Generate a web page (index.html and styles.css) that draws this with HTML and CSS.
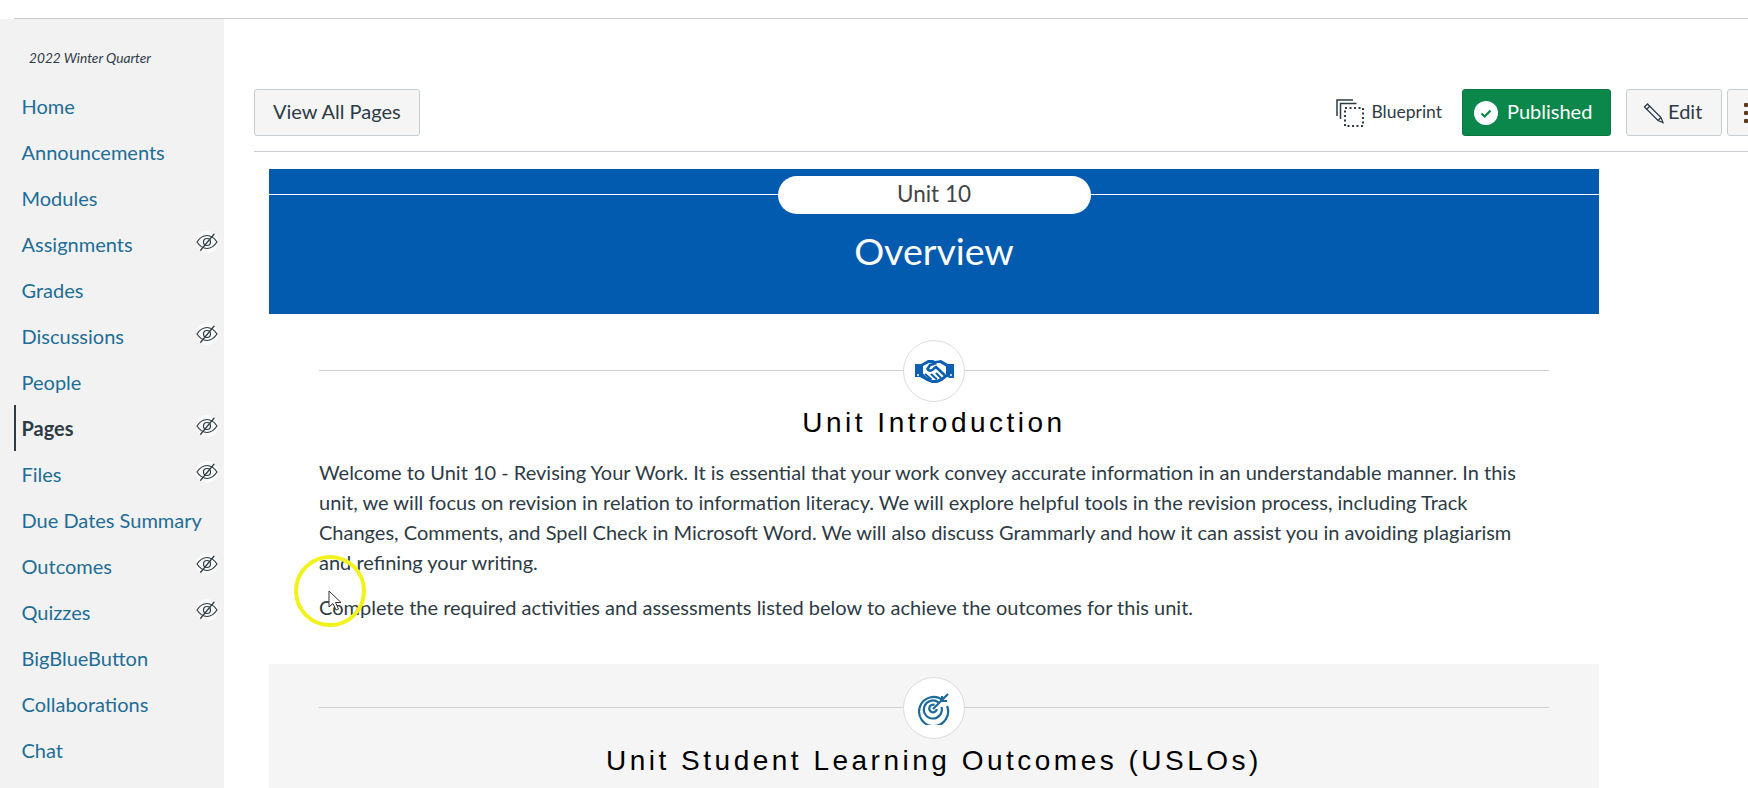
FILE: index.html
```html
<!DOCTYPE html>
<html lang="en">
<head>
  <meta charset="UTF-8">
  <meta name="viewport" content="width=device-width, initial-scale=1.0">
  <title>Overview</title>
  <link rel="stylesheet" href="styles.css">
</head>
<body>
<div class="top-line"></div>
<div class="layout">
  <nav class="sidebar">
    <div class="term">2022 Winter Quarter</div>
    <ul class="nav">
      <li><a href="#">Home</a></li>
      <li><a href="#">Announcements</a></li>
      <li><a href="#">Modules</a></li>
      <li><a href="#">Assignments</a><svg class="eye"><use href="#eye-off"/></svg></li>
      <li><a href="#">Grades</a></li>
      <li><a href="#">Discussions</a><svg class="eye"><use href="#eye-off"/></svg></li>
      <li><a href="#">People</a></li>
      <li class="active"><a href="#">Pages</a><svg class="eye"><use href="#eye-off"/></svg></li>
      <li><a href="#">Files</a><svg class="eye"><use href="#eye-off"/></svg></li>
      <li><a href="#">Due Dates Summary</a></li>
      <li><a href="#">Outcomes</a><svg class="eye"><use href="#eye-off"/></svg></li>
      <li><a href="#">Quizzes</a><svg class="eye"><use href="#eye-off"/></svg></li>
      <li><a href="#">BigBlueButton</a></li>
      <li><a href="#">Collaborations</a></li>
      <li><a href="#">Chat</a></li>
    </ul>
  </nav>

  <main class="main">
    <div class="toolbar">
      <a class="btn" href="#">View All Pages</a>
      <div class="toolbar-right">
        <span class="blueprint">
          <svg width="28" height="28" viewBox="0 0 28 28" fill="none" stroke="#2d3b45" stroke-width="1.5">
            <path d="M1 17V1h16"/>
            <path d="M4.5 20V4.500h16"/>
            <path d="M9 9h18v18H9z" stroke-width="2" stroke-dasharray="2 2.500"/>
          </svg>
          Blueprint
        </span>
        <a class="btn btn-published" href="#">
          <svg width="24" height="24" viewBox="0 0 24 24">
            <circle cx="12" cy="12" r="12" fill="#fff"/>
            <path d="M7.500 12.500l3.200 3 5.800-6" fill="none" stroke="#0b874b" stroke-width="2.200"/>
          </svg>
          Published
        </a>
        <a class="btn btn-edit" href="#">
          <svg width="22" height="22" viewBox="0 0 22 22" fill="none" stroke="#2d3b45" stroke-width="1.300">
            <path d="M1.500 5L4.500 2 18 15.500 20 20.500 15 18.500z"/>
            <path d="M3.500 7.500l3.500-3.500M15 18.500l3-3"/>
          </svg>
          Edit
        </a>
        <a class="btn btn-more" href="#"><span class="kebab"></span></a>
      </div>
    </div>

    <div class="page">
      <div class="banner">
        <div class="pill-row"><span class="pill">Unit 10</span></div>
        <h1>Overview</h1>
      </div>

      <section class="block">
        <div class="divider">
          <span class="icon-circle">
            <svg width="39" height="24" viewBox="0 0 39 24">
              <path fill="#0d5fb3" d="M0 5h6l7-4h5l2 1 6-1 7 4h6v14h-4l-3-1-5 4-5 2h-5l-5-2-7-4H0z"/>
              <path fill="#fff" d="M8 7L14 4h11l6 3.500v8l-3 2-6 3.500h-5l-6-3.500-3-3z"/>
              <path fill="none" stroke="#0d5fb3" stroke-width="2.600" d="M21.500 4L15 6l-2.500 4c1 2.500 4.500 2 6.500-.5L21 8l9 8.500"/>
              <path fill="none" stroke="#0d5fb3" stroke-width="2" d="M10 15l6.500 5.500M16 15l6 5.500M21 14l5 5"/>
              <circle cx="3" cy="16" r="1" fill="#fff"/>
              <circle cx="36" cy="16" r="1" fill="#fff"/>
            </svg>
          </span>
        </div>
        <h2>Unit Introduction</h2>
        <p>Welcome to Unit 10 - Revising Your Work. It is essential that your work convey accurate information in an understandable manner. In this unit, we will focus on revision in relation to information literacy. We will explore helpful tools in the revision process, including Track Changes, Comments, and Spell Check in Microsoft Word. We will also discuss Grammarly and how it can assist you in avoiding plagiarism and refining your writing.</p>
        <p>Complete the required activities and assessments listed below to achieve the outcomes for this unit.</p>
      </section>

      <section class="block block-gray">
        <div class="divider">
          <span class="icon-circle">
            <svg width="34" height="34" viewBox="0 0 34 34" fill="none" stroke="#1d6a9e" stroke-width="2.200">
              <path d="M26 9.500A14.500 14.500 0 1 0 30 15"/>
              <path d="M21.500 11.500A9 9 0 1 0 24.500 16"/>
              <path d="M17.500 14A3.800 3.800 0 1 0 19.800 18"/>
              <path d="M16 18L31 3M25 5v5h5"/>
            </svg>
          </span>
        </div>
        <h2>Unit Student Learning Outcomes (USLOs)</h2>
      </section>
    </div>
  </main>
</div>

<!-- cursor highlight from the screen recording -->
<div class="cursor-ring"></div>
<svg class="cursor" width="14" height="22" viewBox="0 0 14 22">
  <path d="M1 1v16l4-3.500 3 6.500 2.500-1-3-6.500H13z" fill="#fff" stroke="#333" stroke-width="1"/>
</svg>

<svg class="defs" width="0" height="0">
  <symbol id="eye-off" viewBox="0 0 22 22">
    <path d="M1 11c3-4.500 6.500-6.500 10-6.500s7 2 10 6.500c-3 4.500-6.500 6.500-10 6.500S4 15.500 1 11z" fill="none" stroke="#2d3b45" stroke-width="1.200"/>
    <circle cx="11" cy="11" r="3.500" fill="none" stroke="#2d3b45" stroke-width="1.200"/>
    <path d="M4 20L19 2" stroke="#2d3b45" stroke-width="1.200"/>
  </symbol>
</svg>
</body>
</html>
```

FILE: styles.css
```css
html {
    overflow: hidden;
}

body {
    font-family: Lato, "Open Sans", sans-serif;
    margin: 0;
    padding: 0;
    height: 788px;
    overflow: hidden;
    background-color: #fff;
    color: #2d3b45;
    position: relative;
}

.top-line {
    height: 19px;
    margin-left: 14px;
    border-bottom: 1px solid #c7cdd1;
    box-sizing: border-box;
}

.layout {
    display: flex;
    height: 769px;
}

/* Sidebar */
.sidebar {
    width: 224px;
    flex-shrink: 0;
    background-color: #f2f2f3;
}

.term {
    font-size: 13.700px;
    font-style: italic;
    line-height: 20px;
    padding: 29px 0 0 29px;
}

.nav {
    list-style: none;
    margin: 15px 0 0;
    padding: 0;
}

.nav li {
    display: flex;
    align-items: center;
    justify-content: space-between;
    height: 46px;
    padding: 0 6px 0 21.500px;
    font-size: 20px;
    position: relative;
}

.nav a {
    color: #1e6d96;
    text-decoration: none;
}

.nav .active a {
    color: #2d3b45;
    font-weight: bold;
}

.nav .active::before {
    content: "";
    position: absolute;
    left: 14px;
    top: 0;
    width: 2px;
    height: 46px;
    background-color: #2d3b45;
}

.eye {
    width: 22px;
    height: 22px;
    margin-top: -4px;
    background-color: #fafafa;
    border-radius: 50%;
}

/* Toolbar */
.main {
    flex: 1;
    min-width: 0;
    padding-left: 30px;
}

.toolbar {
    display: flex;
    justify-content: space-between;
    align-items: center;
    height: 133px;
    padding-top: 70px;
    padding-bottom: 15px;
    box-sizing: border-box;
    border-bottom: 1px solid #c7cdd1;
    width: 1500px;
}

.toolbar-right {
    display: flex;
    align-items: center;
    margin-right: -13px;
}

.btn {
    display: flex;
    align-items: center;
    height: 47px;
    box-sizing: border-box;
    padding: 0 18px 4px;
    font-size: 20px;
    color: #2d3b45;
    text-decoration: none;
    background-color: #f5f5f5;
    border: 1px solid #c7cdd1;
    border-radius: 3px;
}

.btn svg {
    margin-top: 4px;
}

.blueprint {
    display: flex;
    align-items: center;
    gap: 7px;
    font-size: 17.500px;
    margin-right: 20px;
    padding-bottom: 2px;
}

.blueprint svg {
    margin-top: 2px;
}

.btn-published {
    width: 149px;
    padding: 0 0 4px 11px;
    gap: 9px;
    color: #fff;
    background-color: #0b874b;
    border-color: #0a7a44;
}

.btn-edit {
    width: 96px;
    margin-left: 15px;
    padding: 0 0 4px 16px;
    gap: 3px;
}

.btn-more {
    width: 40px;
    margin-left: 5px;
    padding: 0 0 0 16px;
}

.kebab {
    width: 4px;
    height: 24px;
    background-image: radial-gradient(circle, #5c3a1c 2px, transparent 2.500px);
    background-size: 4px 8px;
}

/* Page content */
.page {
    width: 1330px;
    margin-left: 15px;
    padding-top: 17px;
}

.banner {
    height: 145px;
    background-color: #035bb0;
    color: #fff;
    text-align: center;
    padding-top: 7px;
    box-sizing: border-box;
}

.pill-row {
    background: linear-gradient(#fff, #fff) 0 18px / 100% 1px no-repeat;
}

.pill {
    display: block;
    width: 313px;
    height: 38px;
    margin: 0 auto;
    line-height: 36px;
    font-size: 22.500px;
    color: #444;
    background-color: #fff;
    border-radius: 19px;
}

.banner h1 {
    margin: 14px 0 0;
    font-size: 37.500px;
    font-weight: normal;
    line-height: 46px;
}

.block {
    padding: 26px 50px 0;
    height: 350px;
    box-sizing: border-box;
}

.block-gray {
    height: 124px;
    background-color: #f5f5f5;
    padding-top: 13px;
}

.divider {
    height: 62px;
    display: flex;
    justify-content: center;
    align-items: center;
    background: linear-gradient(#cfd3d6, #cfd3d6) 0 30px / 100% 1px no-repeat;
}

.icon-circle {
    width: 62px;
    height: 62px;
    box-sizing: border-box;
    display: flex;
    justify-content: center;
    align-items: center;
    background-color: #fff;
    border: 1px solid #d9dcde;
    border-radius: 50%;
}

.block h2 {
    margin: 5px 0 0;
    text-align: center;
    font-family: "Liberation Sans", Arial, sans-serif;
    font-size: 28px;
    font-weight: normal;
    line-height: 32px;
    letter-spacing: 3.500px;
    color: #000;
}

.block-gray h2 {
    margin-top: 6px;
    white-space: nowrap;
}

.block p {
    margin: 0 20px 15px 0;
    font-size: 20px;
    line-height: 30px;
}

.block h2 + p {
    margin-top: 18px;
}

/* Cursor overlay */
.cursor-ring {
    position: absolute;
    left: 294px;
    top: 555px;
    width: 72px;
    height: 72px;
    box-sizing: border-box;
    border: 4px solid #f2f21e;
    border-radius: 50%;
}

.cursor {
    position: absolute;
    left: 328px;
    top: 590px;
}

.defs {
    position: absolute;
}
```
